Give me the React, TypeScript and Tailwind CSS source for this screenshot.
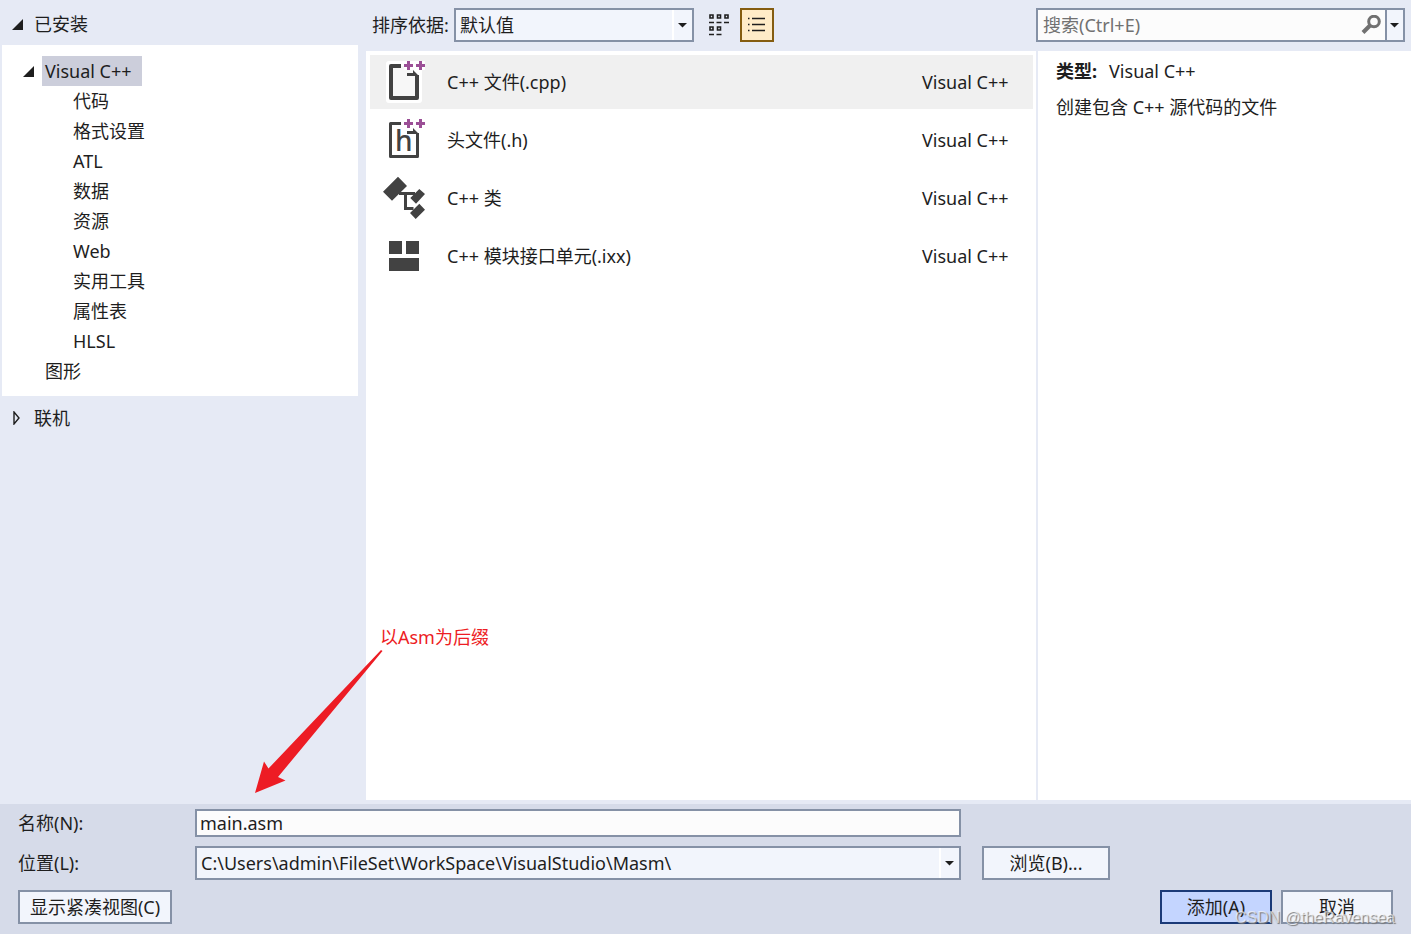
import { useState } from "react";
import type { ReactNode } from "react";
import clsx from "clsx";

const categories = [
  "代码",
  "格式设置",
  "ATL",
  "数据",
  "资源",
  "Web",
  "实用工具",
  "属性表",
  "HLSL",
];

const Pluses = () => (
  <>
    <path d="M38.5 6v9M34 10.5h9M50.5 6v9M46 10.5h9" stroke="#fff" strokeWidth="8" />
    <path d="M38.5 6v9M34 10.5h9M50.5 6v9M46 10.5h9" stroke="#9b4f96" strokeWidth="3" />
  </>
);

const CppFileIcon = () => (
  <>
    <rect x="16" y="6" width="36" height="42" rx="3" fill="#fff" />
    <path d="M21 11h20l6 8v24H21z" fill="#f7f7f7" />
    <path d="M31 11H21v32h26V20" fill="none" stroke="#424242" strokeWidth="4" strokeLinejoin="round" />
    <Pluses />
    <path d="M37 18h6v-3l6 6h-12z" fill="#424242" />
  </>
);

const HeaderFileIcon = () => (
  <>
    <path d="M31 10.5H20.5v33h27V20" fill="none" stroke="#424242" strokeWidth="3" strokeLinejoin="round" />
    <Pluses />
    <path d="M37 18h6v-3l6 6h-12z" fill="#424242" />
    <text x="25" y="38" fontSize="28" fontWeight="500" fill="#424242">
      h
    </text>
  </>
);

const ClassIcon = () => (
  <>
    <path
      d="M28 5.7l9 9.3-15 14.7-9-9zM49.3 18l5.7 5-9 9.7-5.7-5.7zM49.3 32.7l5.7 6-9.3 9.3-5.7-6z"
      fill="#424242"
    />
    <path d="M29 22.5h16M35.5 22.5v15h8" fill="none" stroke="#424242" strokeWidth="3" />
  </>
);

const ModuleIcon = () => (
  <path d="M19 12h13v13H19zM36 12h13v13H36zM19 29h30v13H19z" fill="#424242" />
);

const templates: { name: string; icon: ReactNode }[] = [
  { name: "C++ 文件(.cpp)", icon: <CppFileIcon /> },
  { name: "头文件(.h)", icon: <HeaderFileIcon /> },
  { name: "C++ 类", icon: <ClassIcon /> },
  { name: "C++ 模块接口单元(.ixx)", icon: <ModuleIcon /> },
];

const Expander = ({ open }: { open: boolean }) => (
  <svg width="12" height="14" viewBox="0 0 12 14" aria-hidden="true">
    {open ? (
      <path d="M11 2v11H0z" fill="#1e1e1e" />
    ) : (
      <path d="M2 1v12l5-6z" fill="none" stroke="#1e1e1e" strokeWidth="1.4" />
    )}
  </svg>
);

const Caret = () => (
  <svg width="10" height="6" viewBox="0 0 10 6" aria-hidden="true">
    <path d="M0 1h9L4.5 5.5z" fill="#1e1e1e" />
  </svg>
);

const ComboBox = ({ id, value, className }: { id: string; value: string; className: string }) => (
  <div className={clsx("relative h-[34px]", className)}>
    <select
      id={id}
      className="h-full w-full appearance-none border-2 border-[#8591a6] bg-[#f2f5fc] pr-6 pl-1 leading-6"
    >
      <option>{value}</option>
    </select>
    <span className="pointer-events-none absolute inset-y-[2px] right-[2px] flex w-5 items-center justify-center border-l-2 border-white">
      <Caret />
    </span>
  </div>
);

const DialogButton = ({ children, className }: { children: ReactNode; className: string }) => (
  <button type="button" className={clsx("h-[34px] border-2", className)}>
    {children}
  </button>
);

export default function App() {
  const [installedOpen, setInstalledOpen] = useState(true);
  const [cppOpen, setCppOpen] = useState(true);
  const [selected, setSelected] = useState(0);
  const [fileName, setFileName] = useState("main.asm");

  return (
    <div className="relative flex min-h-screen flex-col bg-[#e6eaf5] font-['Noto_Sans','Noto_Sans_CJK_SC',sans-serif] text-lg leading-6 text-[#1e1e1e]">
      <div className="relative flex flex-1 pb-1">
        <nav className="w-[366px] shrink-0 pr-2 pl-0.5">
          <button
            type="button"
            aria-expanded={installedOpen}
            onClick={() => setInstalledOpen(!installedOpen)}
            className="flex h-[45px] w-full items-center gap-2.5 pt-0.5 pl-2.5"
          >
            <Expander open={installedOpen} />
            已安装
          </button>
          {installedOpen && (
            <div className="bg-white pt-[11px] pb-2.5">
              <div className="flex h-[30px] items-center pl-[21px]">
                <button
                  type="button"
                  aria-label="展开 Visual C++"
                  aria-expanded={cppOpen}
                  onClick={() => setCppOpen(!cppOpen)}
                >
                  <Expander open={cppOpen} />
                </button>
                <button type="button" className="ml-[7px] h-full w-[100px] bg-[#cccedb] pl-[3px] text-left">
                  Visual C++
                </button>
              </div>
              {cppOpen && (
                <ul>
                  {categories.map((category) => (
                    <li key={category} className="flex h-[30px] items-center pl-[71px]">
                      {category}
                    </li>
                  ))}
                </ul>
              )}
              <div className="flex h-[30px] items-center pl-[43px]">图形</div>
            </div>
          )}
          <button type="button" aria-expanded={false} className="flex h-11 w-full items-center gap-2.5 pl-2.5">
            <Expander open={false} />
            联机
          </button>
        </nav>

        <div className="flex min-w-0 flex-1 flex-col">
          <header className="flex h-[51px] shrink-0 justify-between pt-2 pr-1.5 pl-1.5">
            <div className="flex h-[34px] items-center">
              <label htmlFor="sort" className="w-[82px] whitespace-nowrap">
                排序依据:
              </label>
              <ComboBox id="sort" value="默认值" className="w-60" />
              <button type="button" aria-label="中等图标" className="ml-2 flex h-[34px] w-[34px] items-center justify-center">
                <svg width="22" height="24" viewBox="0 0 22 24" aria-hidden="true">
                  <path
                    d="M2 2h3v3H2zM9.5 2h3v3h-3zM17 2h3v3h-3zM2 14h3v3H2zM9.5 14h3v3h-3z"
                    fill="none"
                    stroke="#1e1e1e"
                    strokeWidth="1.6"
                  />
                  <path d="M1 9.5h5M8.5 9.5h5M16 9.5h5M1 21.500h5M8.500 21.500h5" stroke="#1e1e1e" strokeWidth="1.4" />
                </svg>
              </button>
              <button
                type="button"
                aria-label="小图标"
                className="ml-1 flex h-[34px] w-[34px] items-center justify-center border-2 border-[#855d10] bg-[#ffecc8]"
              >
                <svg width="18" height="16" viewBox="0 0 18 16" aria-hidden="true">
                  <path d="M0 1.500h1.500M0 7.500h1.500M0 13.500h1.500M4 1.500h13M4 7.500h13M4 13.500h13" stroke="#1e1e1e" strokeWidth="1.3" />
                </svg>
              </button>
            </div>
            <div className="flex h-[34px] w-[369px] border-2 border-[#8591a6] bg-[#fcfcfc]">
              <input
                type="text"
                aria-label="搜索"
                placeholder="搜索(Ctrl+E)"
                className="min-w-0 flex-1 pl-[5px] placeholder:text-[#717171] focus:outline-none"
              />
              <button type="button" aria-label="搜索" className="flex w-7 items-center justify-center">
                <svg width="20" height="20" viewBox="0 0 20 20" aria-hidden="true">
                  <circle cx="13" cy="6.500" r="5.300" fill="none" stroke="#717171" strokeWidth="3" />
                  <path d="M9 10.500L2 17.500" stroke="#717171" strokeWidth="4" />
                </svg>
              </button>
              <button
                type="button"
                aria-label="搜索选项"
                className="flex w-[18px] items-center justify-center border-l-2 border-[#8591a6] bg-[#f2f5fc]"
              >
                <Caret />
              </button>
            </div>
          </header>

          <div className="flex flex-1 gap-0.5">
            <ul className="flex min-w-0 flex-1 flex-col gap-1 bg-white pt-1 pr-[3px] pl-1">
              {templates.map((template, index) => (
                <li key={template.name}>
                  <button
                    type="button"
                    onClick={() => setSelected(index)}
                    className={clsx(
                      "flex h-[54px] w-full items-center pr-[18px] text-left",
                      index === selected && "bg-[#f0f0f0]"
                    )}
                  >
                    <svg width="77" height="54" viewBox="0 0 77 54" className="shrink-0" aria-hidden="true">
                      {template.icon}
                    </svg>
                    <span className="flex-1">{template.name}</span>
                    <span className="w-[93px]">Visual C++</span>
                  </button>
                </li>
              ))}
            </ul>
            <section className="w-[373px] shrink-0 bg-white pt-0.5 pl-[18px]">
              <p className="flex h-9 items-center gap-3">
                <b>类型:</b>
                <span>Visual C++</span>
              </p>
              <p className="flex h-9 items-center">创建包含 C++ 源代码的文件</p>
            </section>
          </div>
        </div>

        {/* red note pointing at the file name box */}
        <div className="pointer-events-none absolute bottom-[11px] left-[255px] text-[#ed1c24]">
          <p className="pl-[125px]">以Asm为后缀</p>
          <svg width="128" height="144" viewBox="0 0 128 144" aria-hidden="true">
            <path d="M0 144L9 112.5 13.500 119.500 126 1 127.500 2 23 128 30.500 131.500z" fill="currentColor" />
          </svg>
        </div>
      </div>

      <footer className="flex flex-col bg-[#d6dbe9] pt-[5px] pr-[18px] pb-2.5 pl-[18px]">
        <div className="flex items-center">
          <label htmlFor="name" className="w-[177px]">
            名称(N):
          </label>
          <input
            id="name"
            type="text"
            value={fileName}
            onChange={(e) => setFileName(e.target.value)}
            className="mr-[432px] h-7 min-w-0 flex-1 border-2 border-[#8591a6] bg-[#fcfcfc] pl-[3px]"
          />
        </div>
        <div className="mt-[9px] flex items-center">
          <label htmlFor="location" className="w-[177px]">
            位置(L):
          </label>
          <ComboBox
            id="location"
            value="C:\Users\admin\FileSet\WorkSpace\VisualStudio\Masm\"
            className="min-w-0 flex-1"
          />
          <DialogButton className="mr-[283px] ml-[21px] w-32 border-[#8591a6] bg-[#f2f5fc]">浏览(B)...</DialogButton>
        </div>
        <div className="mt-2.5 flex gap-[9px]">
          <DialogButton className="mr-auto w-[154px] border-[#8591a6] bg-[#f2f5fc]">显示紧凑视图(C)</DialogButton>
          <DialogButton className="w-28 border-[#1b3a78] bg-[#c4d5ff]">添加(A)</DialogButton>
          <DialogButton className="w-28 border-[#8591a6] bg-[#f2f5fc]">取消</DialogButton>
        </div>
      </footer>

      <span className="pointer-events-none absolute right-4 bottom-1 font-['Liberation_Sans',sans-serif] text-base text-white/60 [text-shadow:1px_1px_1px_#777]">
        CSDN @theRavensea
      </span>
    </div>
  );
}
